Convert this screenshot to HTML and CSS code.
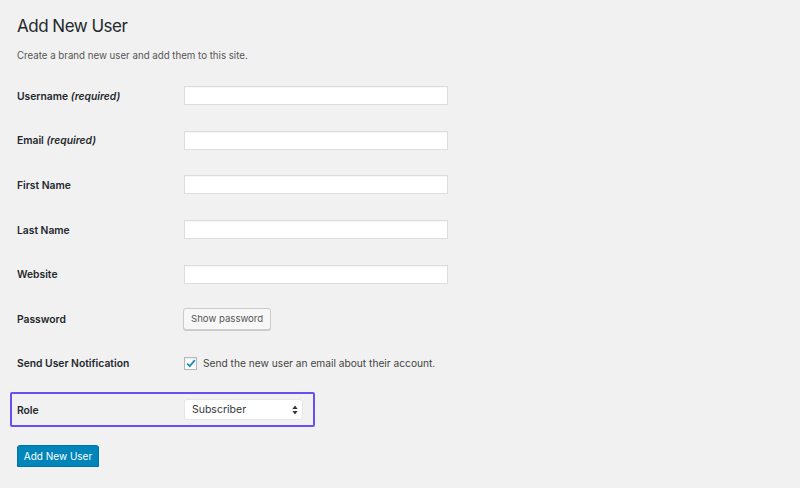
FILE: index.html
```html
<!DOCTYPE html>
<html lang="en">
<head>
    <meta charset="UTF-8">
    <meta name="viewport" content="width=device-width, initial-scale=1.0">
    <title>Add New User</title>
    <link rel="stylesheet" href="styles.css">
</head>
<body>
    <div class="wrap">
        <h1>Add New User</h1>
        <p class="intro">Create a brand new user and add them to this site.</p>

        <form class="user-form">
            <div class="row">
                <label>Username <em>(required)</em></label>
                <input type="text" class="field">
            </div>
            <div class="row">
                <label>Email <em>(required)</em></label>
                <input type="text" class="field">
            </div>
            <div class="row">
                <label>First Name</label>
                <input type="text" class="field">
            </div>
            <div class="row">
                <label>Last Name</label>
                <input type="text" class="field">
            </div>
            <div class="row">
                <label>Website</label>
                <input type="text" class="field">
            </div>
            <div class="row">
                <label>Password</label>
                <button type="button" class="btn">Show password</button>
            </div>
            <div class="row">
                <label>Send User Notification</label>
                <div class="check">
                    <span class="box">
                        <svg width="10" height="9" viewBox="0 0 10 9"><path d="M1.2 4.6 L3.8 7.2 L8.8 1.2" fill="none" stroke="#1e8cbe" stroke-width="1.8"/></svg>
                    </span>
                    <span>Send the new user an email about their account.</span>
                </div>
            </div>
            <div class="row role">
                <label>Role</label>
                <div class="select">
                    <span>Subscriber</span>
                    <svg width="6" height="10" viewBox="0 0 6 10"><path d="M3 0.5 L5.6 4 L0.4 4 Z M3 9.5 L5.6 6 L0.4 6 Z" fill="#333"/></svg>
                </div>
            </div>
        </form>

        <button type="button" class="btn-primary">Add New User</button>
    </div>
</body>
</html>
```

FILE: styles.css
```css
body {
    margin: 0;
    background: #f1f1f1;
    font-family: Inter, "Liberation Sans", sans-serif;
    color: #23282d;
}
.wrap {
    padding: 14px 0 0 17px;
}
h1 {
    margin: 0;
    font-size: 17px;
    font-weight: 400;
    line-height: 24px;
    letter-spacing: -0.5px;
}
.intro {
    margin: 11px 0 0;
    font-size: 9.7px;
    line-height: 14px;
    color: #555;
}
.user-form {
    margin-top: 10.5px;
}
.row {
    display: flex;
    align-items: center;
    height: 44.6px;
}
.row label {
    width: 167px;
    flex-shrink: 0;
    font-size: 10.3px;
    font-weight: 600;
    color: #23282d;
}
.row em {
    font-weight: 600;
}
.field {
    width: 264px;
    height: 19px;
    box-sizing: border-box;
    border: 1px solid #ddd;
    background: #fff;
    box-shadow: inset 0 1px 1px rgba(0, 0, 0, 0.04);
    margin: 0;
}
.btn {
    height: 22px;
    padding: 0 7px;
    margin-left: -1px;
    border: 1px solid #ccc;
    border-radius: 3px;
    background: #f7f7f7;
    box-shadow: 0 1px 0 #ccc;
    font-family: inherit;
    font-size: 9.6px;
    color: #555;
}
.check {
    display: flex;
    align-items: center;
    gap: 6px;
    font-size: 10.2px;
    color: #444;
}
.box {
    width: 11px;
    height: 11px;
    border: 1px solid #b4b9be;
    background: #fff;
    display: flex;
    align-items: center;
    justify-content: center;
    box-shadow: inset 0 1px 2px rgba(0, 0, 0, 0.1);
}
.role {
    margin: 6.5px 0 0 -7px;
    padding-left: 5px;
    width: 296px;
    height: 31px;
    border: 2px solid #6a4ef5;
    border-radius: 2px;
}
.select {
    display: flex;
    align-items: center;
    justify-content: space-between;
    width: 119px;
    height: 21px;
    box-sizing: border-box;
    padding: 0 4px 0 7px;
    background: #fff;
    border: 1px solid #e6e6e6;
    border-radius: 3px;
    font-size: 10.5px;
    color: #32373c;
}
.btn-primary {
    margin-top: 18px;
    height: 22px;
    width: 82px;
    padding: 0;
    border: 1px solid #0073aa;
    border-radius: 3px;
    background: #0085ba;
    box-shadow: 0 1px 0 #006799;
    color: #fff;
    font-family: inherit;
    font-size: 10px;
}
```
